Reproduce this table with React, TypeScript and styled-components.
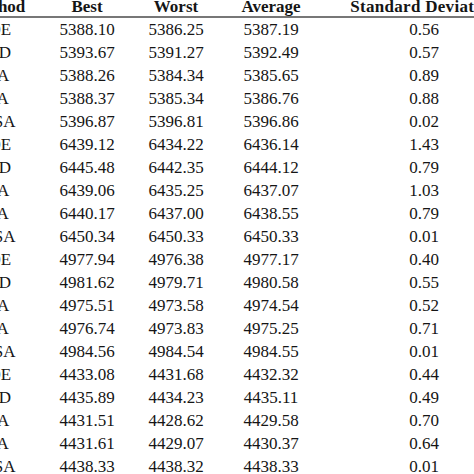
import React from "react";
import styled, { createGlobalStyle } from "styled-components";

const GlobalStyle = createGlobalStyle`
  html, body {
    margin: 0;
    padding: 0;
    background: #ffffff;
  }

  body {
    width: 474px;
    height: 474px;
    overflow: hidden;
  }
`;

const Frame = styled.div`
  width: 474px;
  height: 474px;
  overflow: hidden;
  background: #ffffff;
`;

// the figure is a crop of a wider table, so the first column sits partly off the left edge
const Table = styled.div`
  display: grid;
  grid-template-columns: 90px 90px 88px 102px 204px;
  margin-left: -48px;
  width: 574px;
  font-family: "Liberation Serif", "Times New Roman", serif;
  font-size: 17px;
  color: #151515;
`;

const HeadCell = styled.div<{ $spaced?: boolean }>`
  font-weight: bold;
  text-align: center;
  white-space: nowrap;
  line-height: 13.5px;
  height: 14px;
  padding-bottom: 2px;
  border-bottom: 2px solid #777777;
  letter-spacing: ${(p) => (p.$spaced ? "0.3px" : "0")};
`;

const Cell = styled.div`
  text-align: center;
  white-space: nowrap;
  height: 23px;
  line-height: 23px;
`;

type Row = [string, string, string, string, string];

const rows: Row[] = [
  ["IDE", "5388.10", "5386.25", "5387.19", "0.56"],
  ["IED", "5393.67", "5391.27", "5392.49", "0.57"],
  ["GA", "5388.26", "5384.34", "5385.65", "0.89"],
  ["BA", "5388.37", "5385.34", "5386.76", "0.88"],
  ["ISSA", "5396.87", "5396.81", "5396.86", "0.02"],
  ["IDE", "6439.12", "6434.22", "6436.14", "1.43"],
  ["IED", "6445.48", "6442.35", "6444.12", "0.79"],
  ["GA", "6439.06", "6435.25", "6437.07", "1.03"],
  ["BA", "6440.17", "6437.00", "6438.55", "0.79"],
  ["ISSA", "6450.34", "6450.33", "6450.33", "0.01"],
  ["IDE", "4977.94", "4976.38", "4977.17", "0.40"],
  ["IED", "4981.62", "4979.71", "4980.58", "0.55"],
  ["GA", "4975.51", "4973.58", "4974.54", "0.52"],
  ["BA", "4976.74", "4973.83", "4975.25", "0.71"],
  ["ISSA", "4984.56", "4984.54", "4984.55", "0.01"],
  ["IDE", "4433.08", "4431.68", "4432.32", "0.44"],
  ["IED", "4435.89", "4434.23", "4435.11", "0.49"],
  ["GA", "4431.51", "4428.62", "4429.58", "0.70"],
  ["BA", "4431.61", "4429.07", "4430.37", "0.64"],
  ["ISSA", "4438.33", "4438.32", "4438.33", "0.01"],
];

const headers = ["Method", "Best", "Worst", "Average", "Standard Deviation"];

const App: React.FC = () => {
  return (
    <>
      <GlobalStyle />
      <Frame>
        <Table>
          {headers.map((h, i) => (
            <HeadCell key={h} $spaced={i === headers.length - 1}>
              {h}
            </HeadCell>
          ))}
          {rows.map((row, i) =>
            row.map((value, j) => <Cell key={`${i}-${j}`}>{value}</Cell>)
          )}
        </Table>
      </Frame>
    </>
  );
};

export default App;
